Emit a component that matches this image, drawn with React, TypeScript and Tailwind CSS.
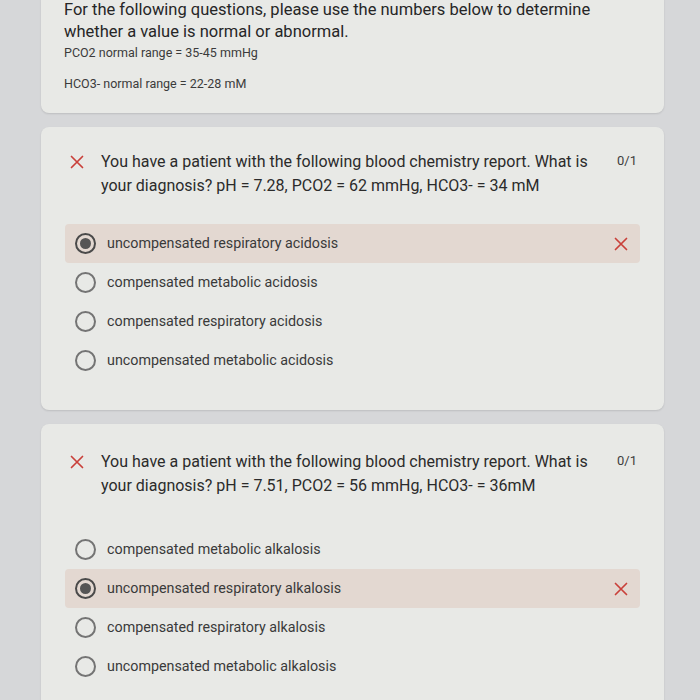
import React from "react";

type Question = {
  lines: string[];
  options: string[];
  picked: number;
};

const questions: Question[] = [
  {
    lines: [
      "You have a patient with the following blood chemistry report. What is",
      "your diagnosis? pH = 7.28, PCO2 = 62 mmHg, HCO3- = 34 mM",
    ],
    options: [
      "uncompensated respiratory acidosis",
      "compensated metabolic acidosis",
      "compensated respiratory acidosis",
      "uncompensated metabolic acidosis",
    ],
    picked: 0,
  },
  {
    lines: [
      "You have a patient with the following blood chemistry report. What is",
      "your diagnosis? pH = 7.51, PCO2 = 56 mmHg, HCO3- = 36mM",
    ],
    options: [
      "compensated metabolic alkalosis",
      "uncompensated respiratory alkalosis",
      "compensated respiratory alkalosis",
      "uncompensated metabolic alkalosis",
    ],
    picked: 1,
  },
];

const Cross: React.FC<{ size?: number }> = ({ size = 14 }) => (
  <svg width={size} height={size} viewBox="0 0 14 14" fill="none">
    <path d="M1.5 1.5 L12.5 12.5 M12.5 1.5 L1.5 12.5" stroke="#c9403a" strokeWidth="1.7" strokeLinecap="round" />
  </svg>
);

const Radio: React.FC<{ checked: boolean }> = ({ checked }) =>
  checked ? (
    <span className="flex h-[21px] w-[21px] items-center justify-center rounded-full border-2 border-[#4a4a4a]">
      <span className="h-[11px] w-[11px] rounded-full bg-[#555555]" />
    </span>
  ) : (
    <span className="block h-[21px] w-[21px] rounded-full border-2 border-[#747474]" />
  );

const QuestionCard: React.FC<{ q: Question; top: string; gap: string }> = ({ q, top, gap }) => (
  <div className={`rounded-lg bg-[#e8e9e6] px-[24px] pb-[30px] shadow-[0_1px_2px_rgba(0,0,0,0.12)] ${top}`}>
    <div className="flex items-start pl-[5px]">
      <div className="mt-[5px] w-[31px] shrink-0">
        <Cross size={14} />
      </div>
      <div className="flex-1 text-[16px] leading-[24px] text-[#2b2b2b]">
        {q.lines.map((l) => (
          <div key={l}>{l}</div>
        ))}
      </div>
      <div className="w-[40px] pr-[3px] text-right text-[13px] leading-[22px] text-[#3d3d3d]">0/1</div>
    </div>
    <div className={`flex flex-col ${gap}`}>
      {q.options.map((opt, i) => (
        <div
          key={opt}
          className={`flex h-[39px] items-center rounded pl-[10px] pr-[12px] ${
            i === q.picked ? "bg-[#e3d8d1]" : ""
          }`}
        >
          <Radio checked={i === q.picked} />
          <span className="ml-[11px] flex-1 text-[14.3px] text-[#3a3a3a]">{opt}</span>
          {i === q.picked && <Cross size={14} />}
        </div>
      ))}
    </div>
  </div>
);

export default function App() {
  return (
    <div
      className="min-h-[700px] w-[700px] overflow-hidden bg-[#d6d7d9]"
      style={{ fontFamily: "Roboto, 'Liberation Sans', sans-serif" }}
    >
      <div className="ml-[41px] flex w-[623px] flex-col gap-[14px]">
        <div className="-mt-[1px] rounded-b-lg bg-[#e8e9e6] px-[23px] pb-[21px] shadow-[0_1px_2px_rgba(0,0,0,0.12)]">
          <div className="text-[16.5px] leading-[22px] text-[#262626]">
            For the following questions, please use the numbers below to determine
            <br />
            whether a value is normal or abnormal.
          </div>
          <div className="mt-[2px] text-[12.5px] leading-[16px] text-[#3b3b3b]">
            PCO2 normal range = 35-45 mmHg
          </div>
          <div className="mt-[15px] text-[12.5px] leading-[16px] text-[#3b3b3b]">
            HCO3- normal range = 22-28 mM
          </div>
        </div>

        <QuestionCard q={questions[0]} top="pt-[23px]" gap="mt-[26px]" />
        <QuestionCard q={questions[1]} top="pt-[26px]" gap="mt-[32px]" />
      </div>
    </div>
  );
}
